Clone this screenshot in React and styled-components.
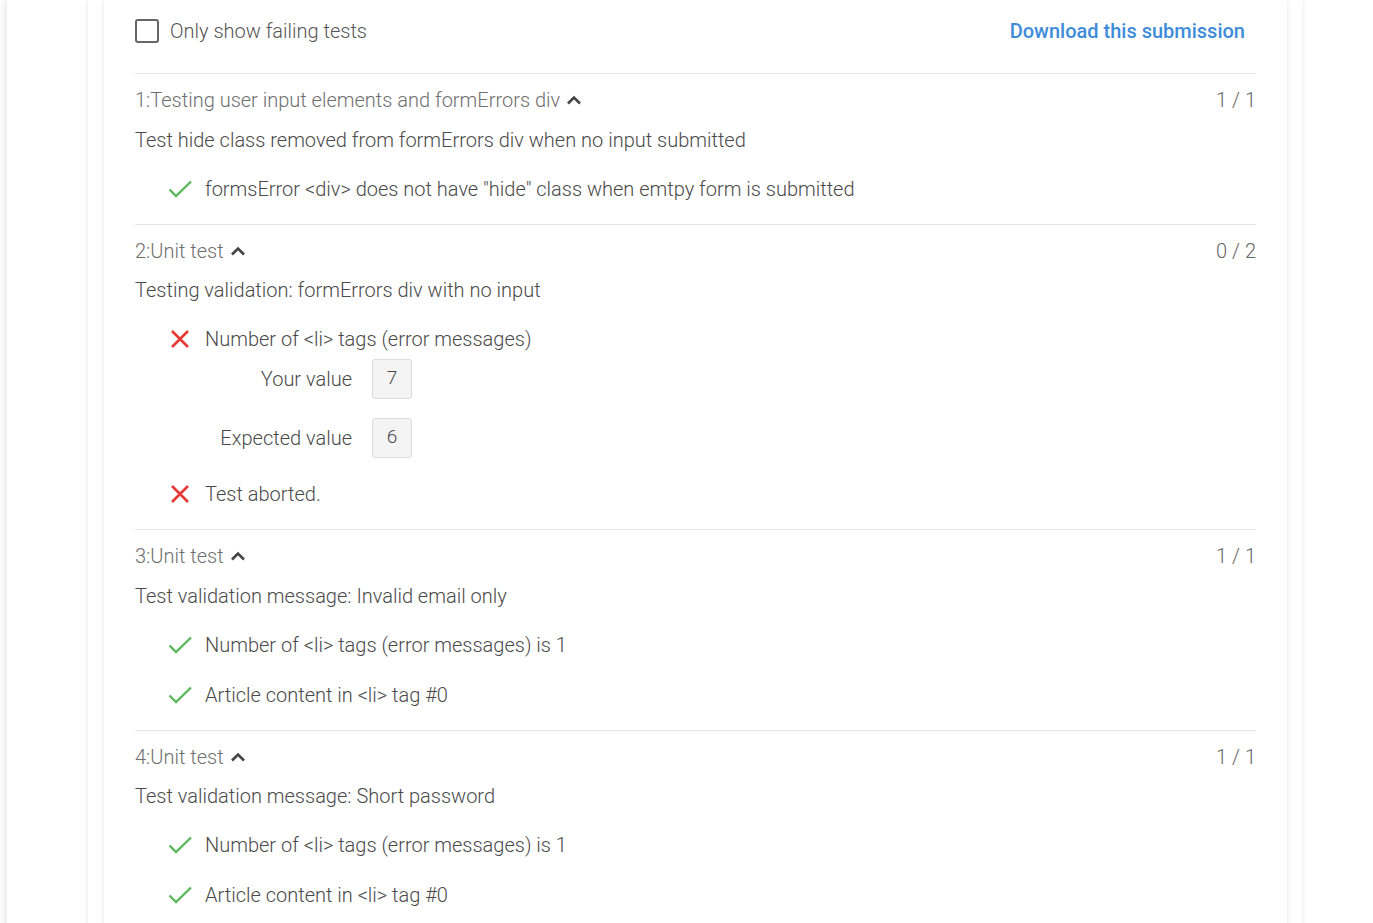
import React from 'react';
import styled, { createGlobalStyle } from 'styled-components';

const GlobalStyle = createGlobalStyle`
  html, body {
    margin: 0;
    padding: 0;
    background: #fff;
  }
  body {
    font-family: Roboto, "Liberation Sans", sans-serif;
    font-weight: 300;
    color: #4a4a4a;
  }
`;

const OuterFrame = styled.div`
  margin-left: 7px;
  min-height: 923px;
  box-shadow: -3px 0 6px rgba(0, 0, 0, 0.08);
  padding-left: 81px;
  overflow: hidden;
`;

const MiddleFrame = styled.div`
  width: 1214px;
  min-height: 923px;
  box-shadow: 0 0 5px rgba(0, 0, 0, 0.1);
  padding: 0 15px 0 16px;
  box-sizing: border-box;
`;

const Card = styled.div`
  min-height: 923px;
  background: #fff;
  box-shadow: 0 0 5px rgba(0, 0, 0, 0.1);
  padding: 0 31px;
`;

const TopBar = styled.div`
  display: flex;
  align-items: center;
  justify-content: space-between;
  padding: 18px 11px 29px 0;
  height: 26px;
`;

const CheckLabel = styled.label`
  display: flex;
  align-items: center;
  gap: 11px;
  font-size: 20px;
  color: #555;
  cursor: pointer;
`;

const Box = styled.span`
  width: 20px;
  height: 20px;
  border: 2px solid #666;
  border-radius: 3px;
  display: inline-block;
`;

const DownloadLink = styled.a`
  font-size: 20px;
  font-weight: 500;
  color: #3d8bd9;
  text-decoration: none;
`;

const Section = styled.section`
  border-top: 1px solid #e6e6e6;
  padding: 13px 0 10px;
`;

const SectionHeader = styled.div`
  display: flex;
  justify-content: space-between;
  align-items: center;
  font-size: 20px;
  line-height: 26px;
  color: #6f6f6f;
`;

const Title = styled.span`
  display: flex;
  align-items: center;
  gap: 6px;
`;

const Score = styled.span`
  color: #666;
`;

const Description = styled.div`
  margin-top: 13.5px;
  font-size: 20px;
  line-height: 26px;
  color: #4a4a4a;
  margin-bottom: 11px;
`;

const Item = styled.div`
  padding: 12px 0 ${(p) => (p.$withValues ? '0' : '12px')} 33px;
  font-size: 20px;
  line-height: 26px;
  color: #4a4a4a;
`;

const ItemLine = styled.div`
  display: flex;
  align-items: center;
  gap: 13px;
`;

const IconSlot = styled.span`
  width: 24px;
  height: 26px;
  display: flex;
  align-items: center;
  justify-content: center;
  flex-shrink: 0;
`;

const Values = styled.div`
  display: flex;
  flex-direction: column;
  gap: 19px;
  margin-top: 7px;
  padding-bottom: 11px;
`;

const ValueRow = styled.div`
  display: flex;
  align-items: center;
  gap: 20px;
`;

const ValueLabel = styled.span`
  width: 147px;
  padding-left: 37px;
  text-align: right;
`;

const ValueBox = styled.span`
  width: 38px;
  height: 35px;
  padding-bottom: 3px;
  border: 1px solid #dcdcdc;
  border-radius: 3px;
  background: #f4f4f4;
  display: flex;
  align-items: center;
  justify-content: center;
  font-size: 19px;
  line-height: 1;
`;

const ChevronUp = () => (
  <svg width="16" height="10" viewBox="0 0 16 10">
    <polyline points="2,8.5 8,2.5 14,8.5" fill="none" stroke="#444" strokeWidth="2.6" />
  </svg>
);

const Check = () => (
  <svg width="24" height="18" viewBox="0 0 24 18">
    <polyline points="1.5,9.5 8,16 23,1.5" fill="none" stroke="#5cb85c" strokeWidth="2.4" />
  </svg>
);

const Cross = () => (
  <svg width="20" height="20" viewBox="0 0 20 20">
    <path d="M2 2 L18 18 M18 2 L2 18" fill="none" stroke="#e53935" strokeWidth="2.6" />
  </svg>
);

const sections = [
  {
    title: '1:Testing user input elements and formErrors div',
    score: '1 / 1',
    description: 'Test hide class removed from formErrors div when no input submitted',
    items: [{ ok: true, text: 'formsError <div> does not have "hide" class when emtpy form is submitted' }],
  },
  {
    title: '2:Unit test',
    score: '0 / 2',
    description: 'Testing validation: formErrors div with no input',
    items: [
      { ok: false, text: 'Number of <li> tags (error messages)', yours: '7', expected: '6' },
      { ok: false, text: 'Test aborted.' },
    ],
  },
  {
    title: '3:Unit test',
    score: '1 / 1',
    description: 'Test validation message: Invalid email only',
    items: [
      { ok: true, text: 'Number of <li> tags (error messages) is 1' },
      { ok: true, text: 'Article content in <li> tag #0' },
    ],
  },
  {
    title: '4:Unit test',
    score: '1 / 1',
    description: 'Test validation message: Short password',
    items: [
      { ok: true, text: 'Number of <li> tags (error messages) is 1' },
      { ok: true, text: 'Article content in <li> tag #0' },
    ],
  },
];

function TestItem({ item }) {
  const withValues = Boolean(item.yours);
  return (
    <Item $withValues={withValues}>
      <ItemLine>
        <IconSlot>{item.ok ? <Check /> : <Cross />}</IconSlot>
        <span>{item.text}</span>
      </ItemLine>
      {withValues && (
        <Values>
          <ValueRow>
            <ValueLabel>Your value</ValueLabel>
            <ValueBox>{item.yours}</ValueBox>
          </ValueRow>
          <ValueRow>
            <ValueLabel>Expected value</ValueLabel>
            <ValueBox>{item.expected}</ValueBox>
          </ValueRow>
        </Values>
      )}
    </Item>
  );
}

export default function App() {
  return (
    <>
      <GlobalStyle />
      <OuterFrame>
        <MiddleFrame>
          <Card>
            <TopBar>
              <CheckLabel>
                <Box />
                Only show failing tests
              </CheckLabel>
              <DownloadLink href="#">Download this submission</DownloadLink>
            </TopBar>
            {sections.map((s) => (
              <Section key={s.title}>
                <SectionHeader>
                  <Title>
                    {s.title}
                    <ChevronUp />
                  </Title>
                  <Score>{s.score}</Score>
                </SectionHeader>
                <Description>{s.description}</Description>
                {s.items.map((it, i) => (
                  <TestItem key={i} item={it} />
                ))}
              </Section>
            ))}
          </Card>
        </MiddleFrame>
      </OuterFrame>
    </>
  );
}
